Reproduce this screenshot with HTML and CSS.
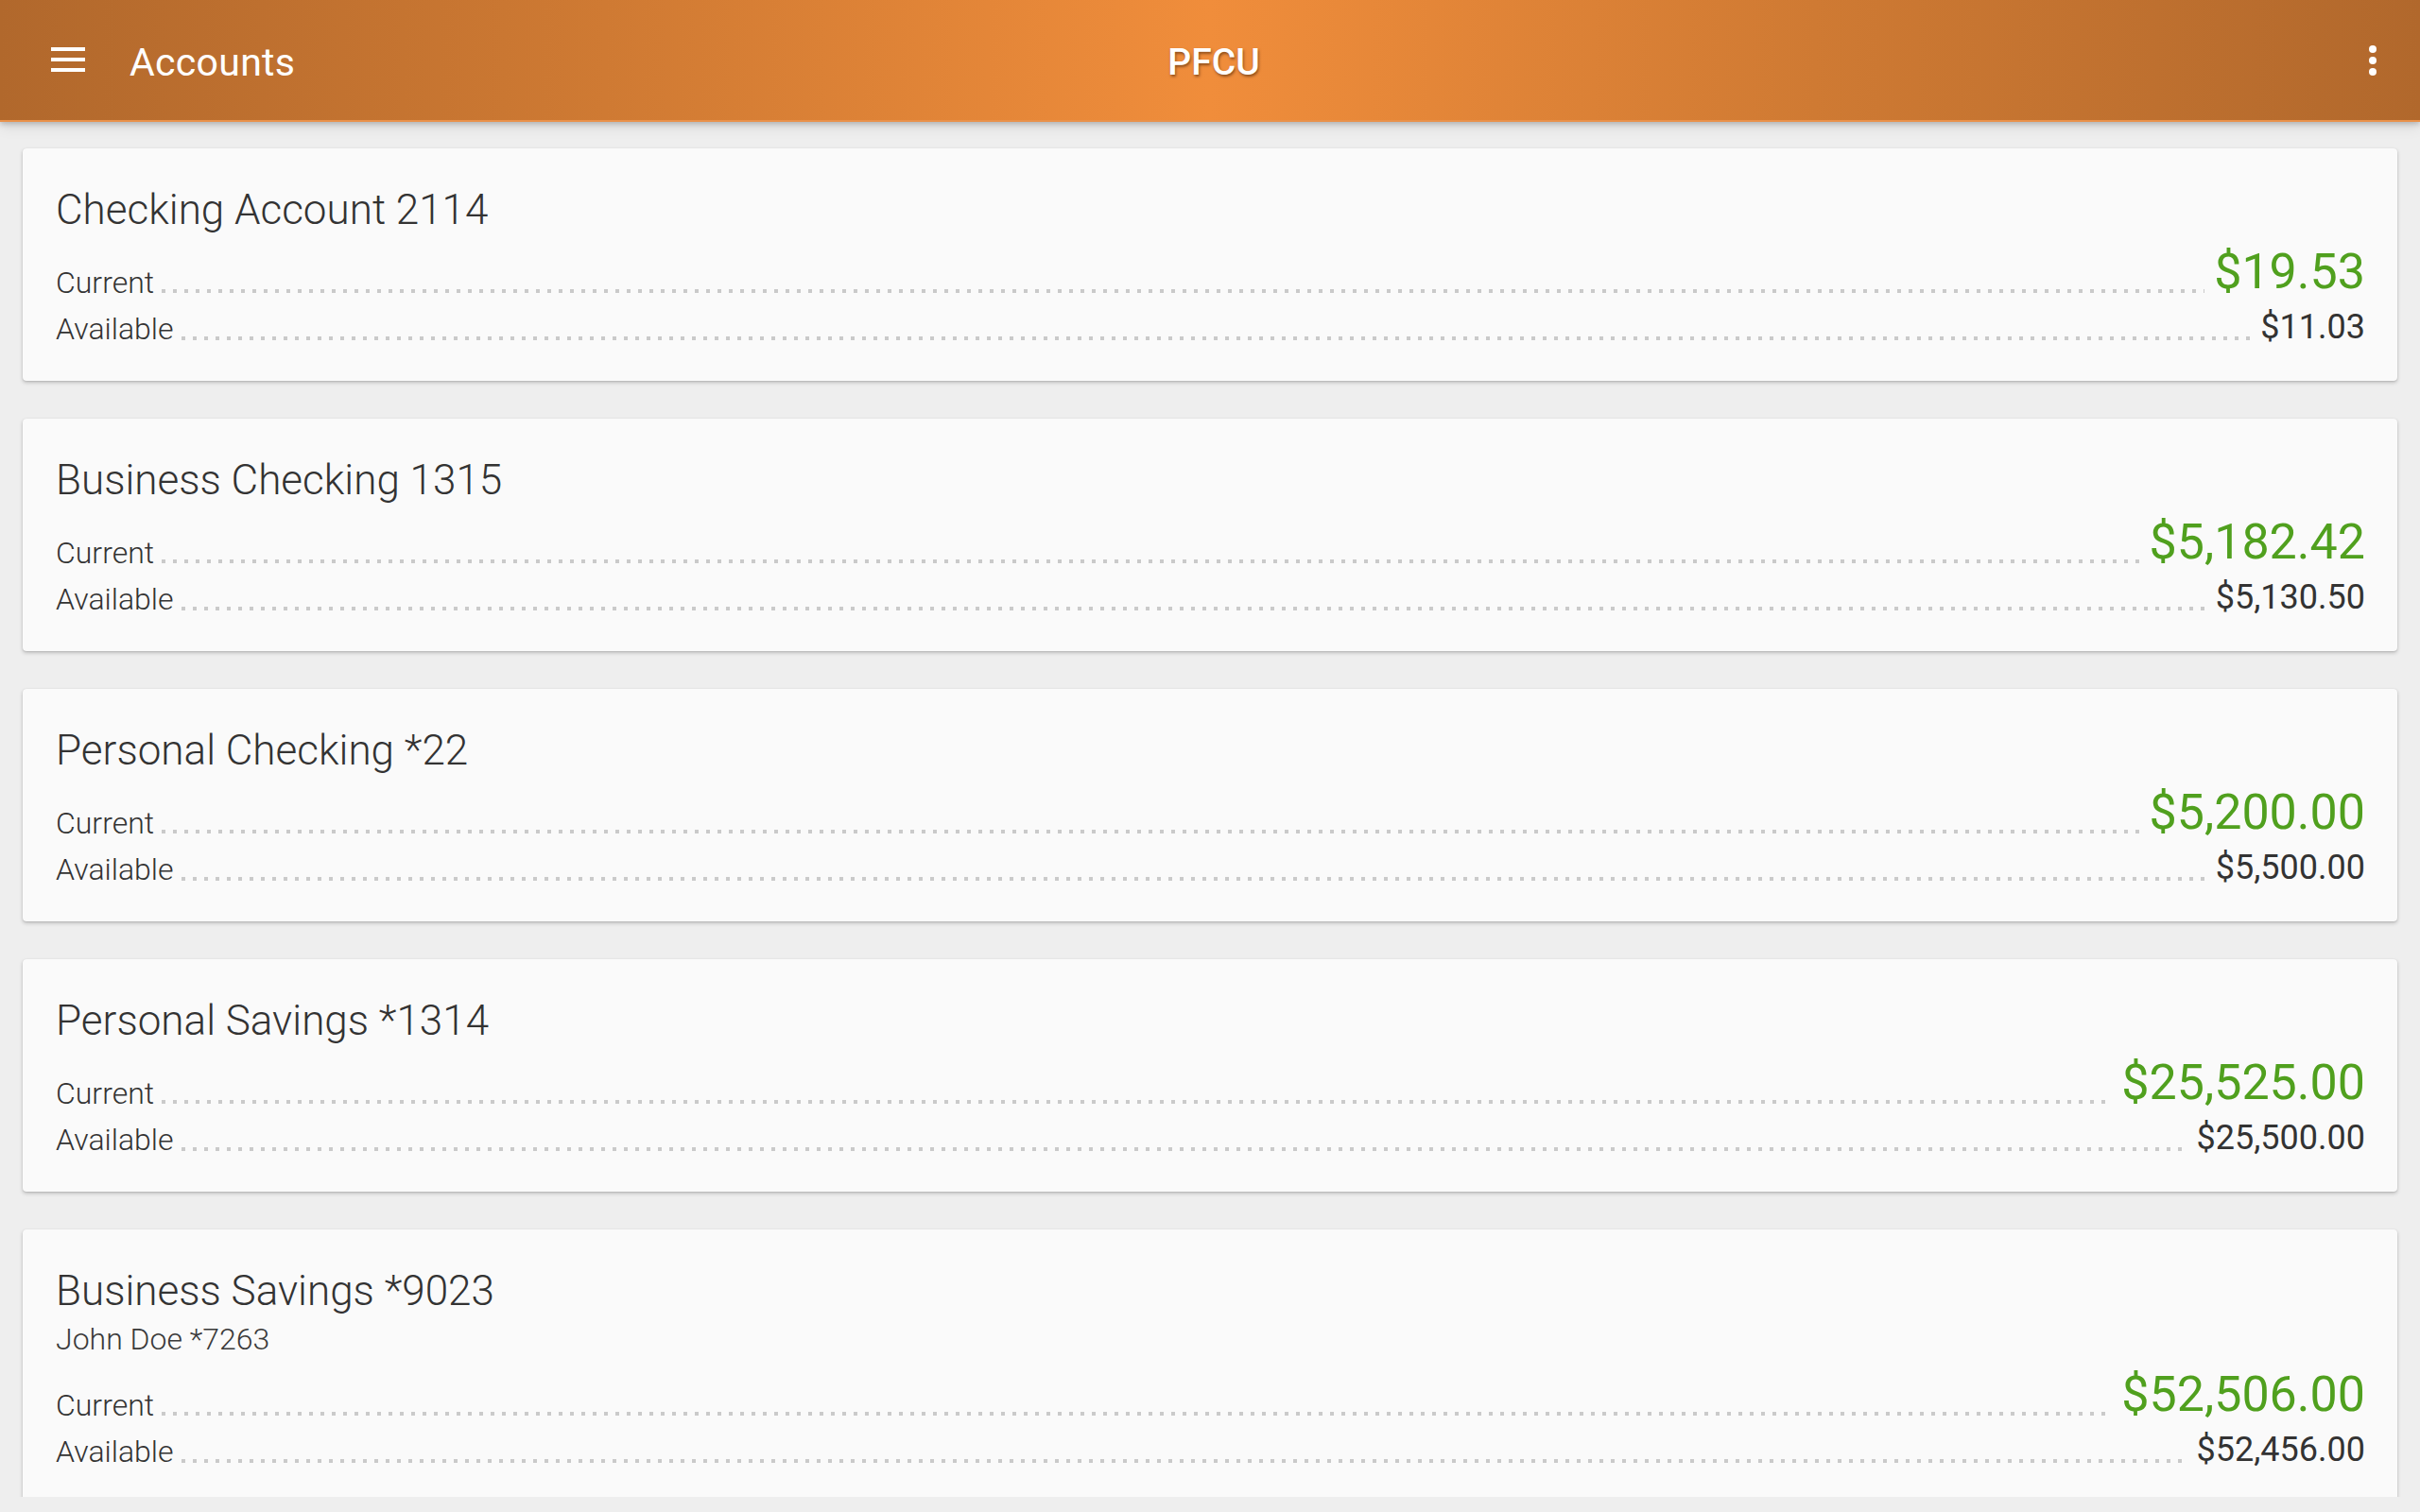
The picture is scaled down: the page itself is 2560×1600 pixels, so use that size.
FILE: index.html
```html
<!DOCTYPE html>
<html lang="en">
<head>
<meta charset="utf-8">
<title>PFCU - Accounts</title>
<link rel="stylesheet" href="styles.css">
</head>
<body>
<div class="app">
  <header class="toolbar">
    <div class="toolbar-left">
      <button class="icon-btn menu-btn" aria-label="Menu">
        <svg width="36" height="26" viewBox="0 0 36 26"><rect x="0" y="0" width="36" height="4" fill="#fff"/><rect x="0" y="11" width="36" height="4" fill="#fff"/><rect x="0" y="22" width="36" height="4" fill="#fff"/></svg>
      </button>
      <span class="toolbar-title">Accounts</span>
    </div>
    <div class="toolbar-brand">PFCU</div>
    <div class="toolbar-right">
      <button class="icon-btn more-btn" aria-label="More options">
        <svg width="8" height="32" viewBox="0 0 8 32"><circle cx="4" cy="4" r="4" fill="#fff"/><circle cx="4" cy="16" r="4" fill="#fff"/><circle cx="4" cy="28" r="4" fill="#fff"/></svg>
      </button>
    </div>
  </header>

  <main class="list">
    <section class="card">
      <div class="card-title">Checking Account 2114</div>
      <div class="row row-current"><span class="label">Current</span><span class="leader"></span><span class="amount amount-current">$19.53</span></div>
      <div class="row row-available"><span class="label">Available</span><span class="leader"></span><span class="amount amount-available">$11.03</span></div>
    </section>

    <section class="card">
      <div class="card-title">Business Checking 1315</div>
      <div class="row row-current"><span class="label">Current</span><span class="leader"></span><span class="amount amount-current">$5,182.42</span></div>
      <div class="row row-available"><span class="label">Available</span><span class="leader"></span><span class="amount amount-available">$5,130.50</span></div>
    </section>

    <section class="card">
      <div class="card-title">Personal Checking *22</div>
      <div class="row row-current"><span class="label">Current</span><span class="leader"></span><span class="amount amount-current">$5,200.00</span></div>
      <div class="row row-available"><span class="label">Available</span><span class="leader"></span><span class="amount amount-available">$5,500.00</span></div>
    </section>

    <section class="card">
      <div class="card-title">Personal Savings *1314</div>
      <div class="row row-current"><span class="label">Current</span><span class="leader"></span><span class="amount amount-current">$25,525.00</span></div>
      <div class="row row-available"><span class="label">Available</span><span class="leader"></span><span class="amount amount-available">$25,500.00</span></div>
    </section>

    <section class="card">
      <div class="card-title">Business Savings *9023</div>
      <div class="card-subtitle">John Doe *7263</div>
      <div class="row row-current"><span class="label">Current</span><span class="leader"></span><span class="amount amount-current">$52,506.00</span></div>
      <div class="row row-available"><span class="label">Available</span><span class="leader"></span><span class="amount amount-available">$52,456.00</span></div>
    </section>
  </main>
</div>
</body>
</html>
```

FILE: styles.css
```css
* { box-sizing: border-box; }

html, body {
  margin: 0;
  padding: 0;
  width: 2560px;
  height: 1600px;
  overflow: hidden;
  background: #eeeeee;
  font-family: Roboto, "Noto Sans", "Liberation Sans", sans-serif;
}

.app {
  display: flex;
  flex-direction: column;
  height: 1600px;
}

.toolbar {
  position: relative;
  z-index: 2;
  flex: 0 0 129px;
  height: 129px;
  display: flex;
  align-items: center;
  justify-content: space-between;
  background: linear-gradient(to right, #b1682c 0%, #cf7a33 25%, #f08d3b 50%, #cf7a33 75%, #b1682c 100%);
  border-bottom: 2px solid #e9914a;
  box-shadow: 0 2px 6px rgba(0, 0, 0, 0.22), 0 6px 14px rgba(0, 0, 0, 0.08);
  color: #ffffff;
}

.toolbar-left {
  flex: 1 1 0;
  display: flex;
  align-items: center;
}

.toolbar-right {
  flex: 1 1 0;
  display: flex;
  justify-content: flex-end;
  align-items: center;
}

.icon-btn {
  background: none;
  border: 0;
  padding: 0;
  margin: 0;
  display: flex;
  align-items: center;
  justify-content: center;
  cursor: pointer;
}

.menu-btn {
  margin-left: 54px;
  margin-top: -1px;
}

.toolbar-title {
  margin-left: 47px;
  font-size: 41px;
  font-weight: 400;
  line-height: 48px;
  letter-spacing: 0.3px;
  margin-top: 5px;
}

.toolbar-brand {
  flex: 0 0 auto;
  font-size: 39px;
  font-weight: 500;
  line-height: 48px;
  margin-top: 5px;
  margin-left: 8px;
  text-shadow: 1px 2px 3px rgba(60, 25, 0, 0.55);
}

.more-btn {
  margin-right: 46px;
  margin-top: 1px;
}

.list {
  flex: 1 1 auto;
  overflow: hidden;
  margin-bottom: 16px;
  padding: 28px 24px 0 24px;
  display: flex;
  flex-direction: column;
  gap: 40px;
}

.card {
  flex: 0 0 auto;
  background: #fafafa;
  border-radius: 4px;
  box-shadow: 0 2px 4px rgba(0, 0, 0, 0.18), 0 1px 2px rgba(0, 0, 0, 0.1), 0 0 1px rgba(0, 0, 0, 0.08);
  padding: 39px 34px 36px 35px;
  color: #333333;
}

.card-title {
  font-size: 44px;
  font-weight: 300;
  line-height: 52px;
  color: #333333;
}

.card-subtitle {
  margin-top: 6px;
  font-size: 32px;
  font-weight: 300;
  line-height: 38px;
  color: #3a3a3a;
}

.row {
  display: flex;
  align-items: flex-end;
}

.row-current {
  margin-top: 10px;
}

.row-available {
  margin-top: 7px;
}

.label {
  flex: 0 0 auto;
  font-size: 32px;
  font-weight: 300;
  line-height: 38px;
  color: #333333;
}

.leader {
  flex: 1 1 auto;
  height: 4px;
  margin: 0 10px 8px 8px;
  background-image: linear-gradient(to right, #cacaca 0, #cacaca 4px, transparent 4px, transparent 12px);
  background-size: 12px 4px;
  background-repeat: repeat-x;
  background-position: 0 0;
}

.row-available .leader {
  margin-bottom: 7px;
}

.amount {
  flex: 0 0 auto;
  font-weight: 400;
  white-space: nowrap;
}

.amount-current {
  font-size: 52px;
  line-height: 60px;
  color: #50a01e;
}

.amount-available {
  font-size: 36px;
  line-height: 42px;
  color: #333333;
}
```
